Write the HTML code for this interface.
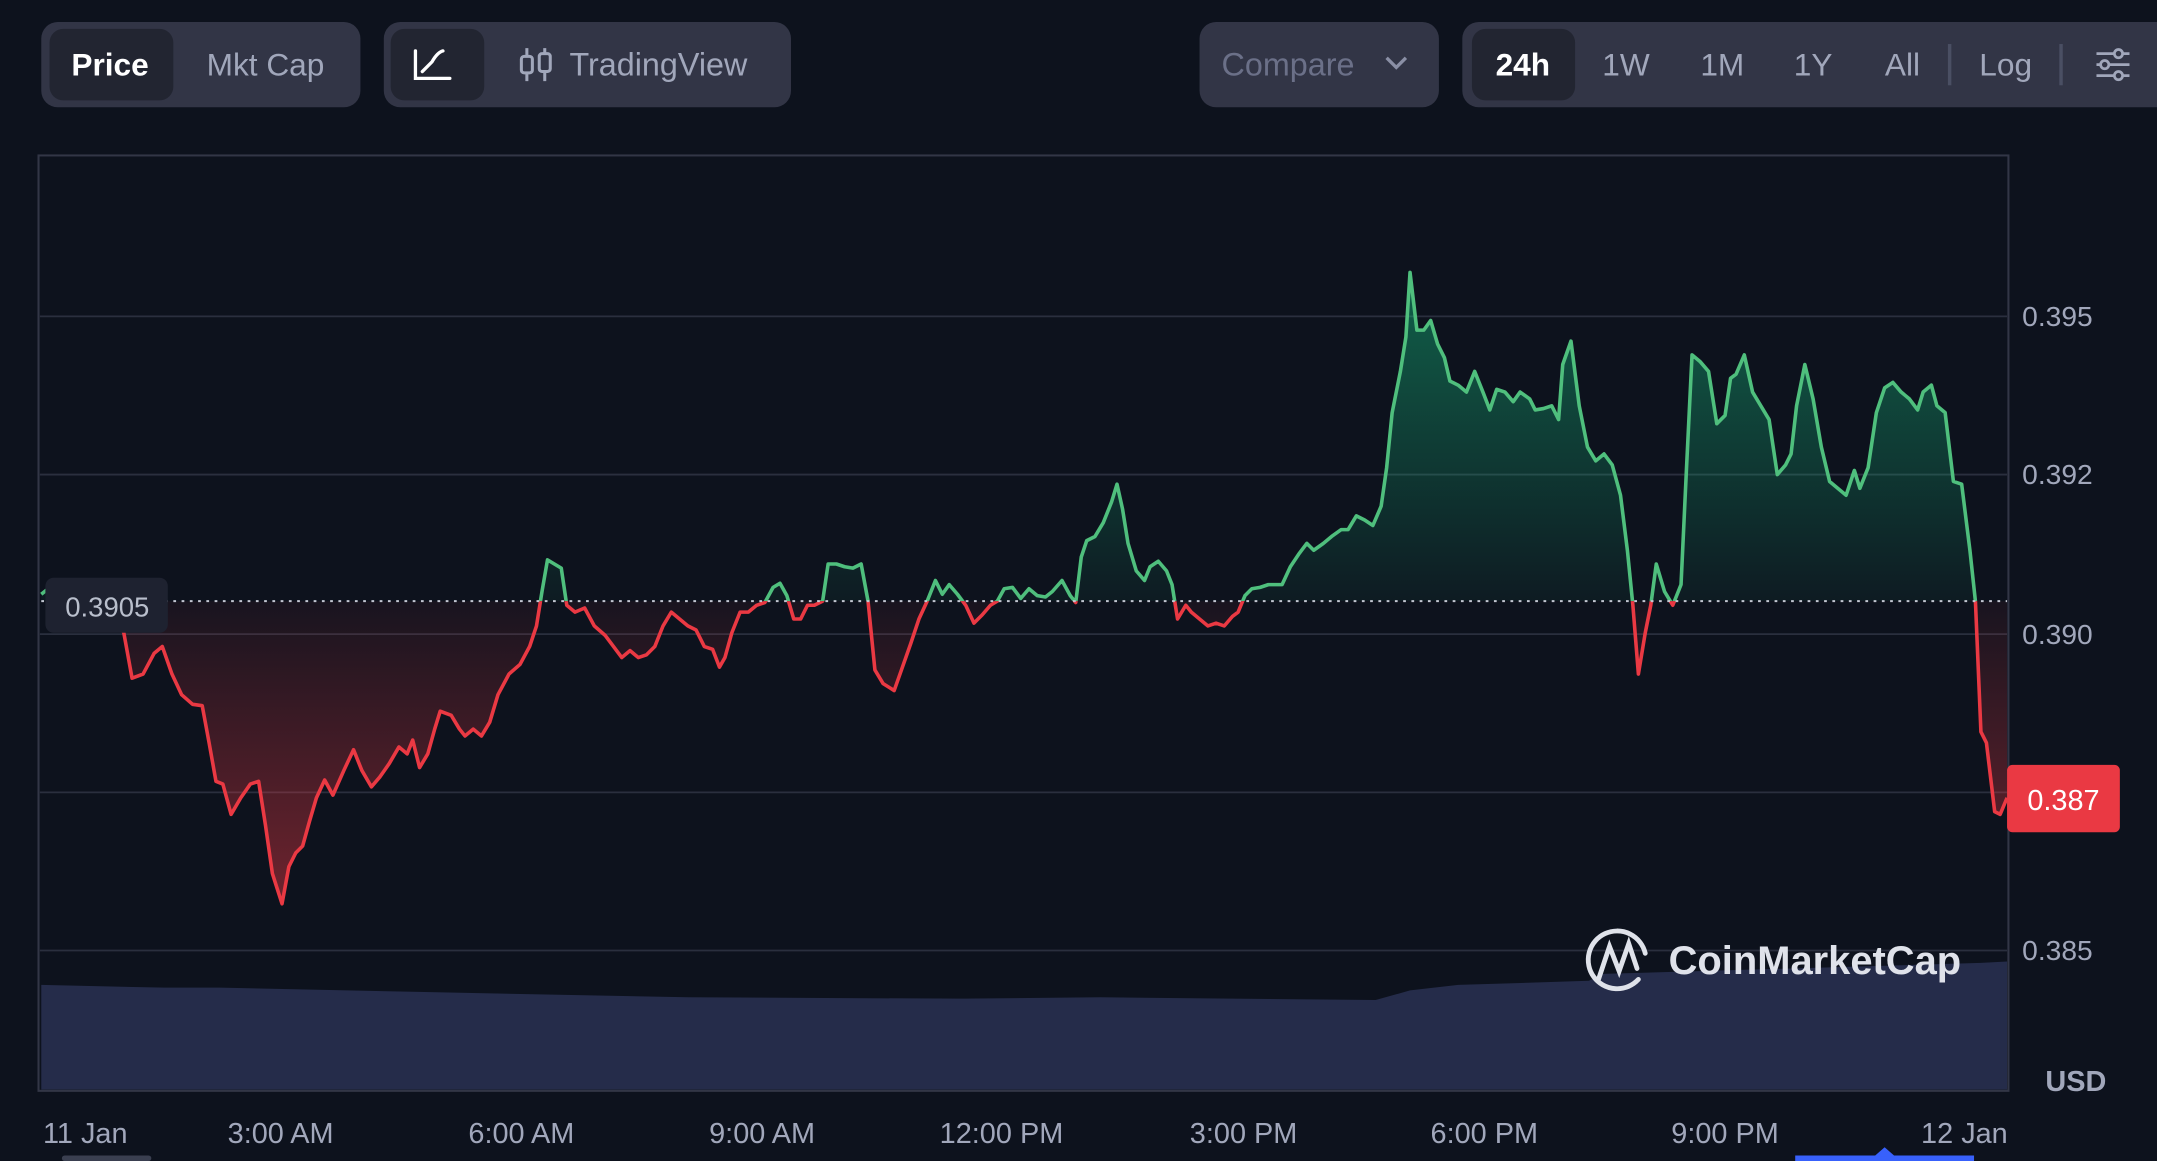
<!DOCTYPE html>
<html><head><meta charset="utf-8"><style>
html,body{margin:0;padding:0;background:#0d121d;overflow:hidden}
svg{display:block}
text{font-family:"Liberation Sans",sans-serif}
</style></head><body>
<svg width="2157" height="1161" viewBox="0 0 1568 844" preserveAspectRatio="none" xmlns="http://www.w3.org/2000/svg">
<defs>
<linearGradient id="gg" x1="0" y1="190" x2="0" y2="437" gradientUnits="userSpaceOnUse"><stop offset="0" stop-color="#16c784" stop-opacity="0.45"/><stop offset="1" stop-color="#16c784" stop-opacity="0.05"/></linearGradient>
<linearGradient id="rg" x1="0" y1="437" x2="0" y2="660" gradientUnits="userSpaceOnUse"><stop offset="0" stop-color="#ea3943" stop-opacity="0.05"/><stop offset="1" stop-color="#ea3943" stop-opacity="0.45"/></linearGradient>
<clipPath id="up"><rect x="0" y="0" width="1568" height="437"/></clipPath>
<clipPath id="dn"><rect x="0" y="437" width="1568" height="400"/></clipPath>
<path id="ln" d="M30,432 L35,428 L40,432 L60,436 L80,440 L90,460 L96,493 L104,490 L112,475 L118,470 L125,490 L132,505 L140,512 L147,513 L152,540 L157,568 L162,570 L168,592 L175,580 L182,570 L188,568 L193,600 L198,635 L205,657 L210,630 L215,620 L220,615 L225,597 L230,580 L236,567 L242,578 L250,560 L257,545 L263,560 L270,572 L276,565 L283,555 L290,543 L296,548 L300,538 L305,558 L311,548 L316,530 L320,517 L328,520 L334,530 L338,535 L344,530 L350,535 L356,525 L362,505 L370,490 L378,483 L385,470 L390,455 L394,430 L398,407 L403,410 L408,413 L412,440 L418,445 L425,442 L432,455 L440,462 L446,470 L452,478 L458,473 L464,478 L470,476 L476,470 L482,455 L488,445 L494,450 L500,455 L506,458 L512,470 L518,472 L523,485 L527,478 L532,460 L538,445 L544,445 L550,440 L556,438 L562,427 L567,424 L572,433 L577,450 L582,450 L587,440 L592,440 L598,437 L602,410 L608,410 L614,412 L620,413 L626,410 L631,437 L636,487 L642,497 L650,502 L656,485 L662,468 L668,450 L674,437 L680,422 L685,432 L690,425 L696,432 L702,440 L708,453 L714,447 L720,440 L725,437 L730,428 L736,427 L742,435 L748,428 L754,433 L760,434 L765,430 L772,422 L778,433 L782,438 L786,405 L790,393 L796,390 L802,380 L808,365 L812,352 L816,370 L820,395 L826,415 L832,422 L836,412 L842,408 L848,415 L852,425 L856,450 L862,440 L866,445 L872,450 L878,455 L884,453 L890,455 L896,448 L900,445 L905,433 L910,428 L916,427 L922,425 L932,425 L938,412 L944,403 L950,395 L955,400 L962,395 L968,390 L975,385 L980,385 L986,375 L992,378 L998,382 L1004,368 L1008,340 L1012,300 L1018,270 L1022,245 L1025,198 L1030,240 L1035,240 L1040,233 L1045,250 L1050,260 L1054,277 L1060,280 L1066,285 L1072,270 L1078,285 L1083,298 L1088,283 L1094,285 L1100,292 L1105,285 L1112,290 L1116,298 L1122,297 L1128,295 L1133,305 L1136,265 L1142,248 L1148,295 L1154,325 L1160,335 L1166,330 L1172,338 L1178,360 L1183,400 L1187,440 L1191,490 L1196,460 L1200,440 L1204,410 L1210,430 L1216,440 L1222,425 L1226,340 L1230,258 L1236,263 L1242,270 L1248,308 L1254,302 L1258,275 L1262,272 L1268,258 L1274,285 L1280,295 L1286,305 L1292,345 L1298,338 L1302,330 L1306,295 L1312,265 L1318,290 L1324,325 L1330,350 L1336,355 L1342,360 L1348,342 L1352,355 L1358,340 L1364,300 L1370,282 L1376,278 L1382,285 L1388,290 L1394,298 L1398,285 L1404,280 L1408,295 L1414,300 L1420,350 L1426,352 L1432,400 L1436,437 L1440,532 L1444,540 L1450,590 L1454,592 L1459,580"/>
<path id="fl" d="M30,432 L35,428 L40,432 L60,436 L80,440 L90,460 L96,493 L104,490 L112,475 L118,470 L125,490 L132,505 L140,512 L147,513 L152,540 L157,568 L162,570 L168,592 L175,580 L182,570 L188,568 L193,600 L198,635 L205,657 L210,630 L215,620 L220,615 L225,597 L230,580 L236,567 L242,578 L250,560 L257,545 L263,560 L270,572 L276,565 L283,555 L290,543 L296,548 L300,538 L305,558 L311,548 L316,530 L320,517 L328,520 L334,530 L338,535 L344,530 L350,535 L356,525 L362,505 L370,490 L378,483 L385,470 L390,455 L394,430 L398,407 L403,410 L408,413 L412,440 L418,445 L425,442 L432,455 L440,462 L446,470 L452,478 L458,473 L464,478 L470,476 L476,470 L482,455 L488,445 L494,450 L500,455 L506,458 L512,470 L518,472 L523,485 L527,478 L532,460 L538,445 L544,445 L550,440 L556,438 L562,427 L567,424 L572,433 L577,450 L582,450 L587,440 L592,440 L598,437 L602,410 L608,410 L614,412 L620,413 L626,410 L631,437 L636,487 L642,497 L650,502 L656,485 L662,468 L668,450 L674,437 L680,422 L685,432 L690,425 L696,432 L702,440 L708,453 L714,447 L720,440 L725,437 L730,428 L736,427 L742,435 L748,428 L754,433 L760,434 L765,430 L772,422 L778,433 L782,438 L786,405 L790,393 L796,390 L802,380 L808,365 L812,352 L816,370 L820,395 L826,415 L832,422 L836,412 L842,408 L848,415 L852,425 L856,450 L862,440 L866,445 L872,450 L878,455 L884,453 L890,455 L896,448 L900,445 L905,433 L910,428 L916,427 L922,425 L932,425 L938,412 L944,403 L950,395 L955,400 L962,395 L968,390 L975,385 L980,385 L986,375 L992,378 L998,382 L1004,368 L1008,340 L1012,300 L1018,270 L1022,245 L1025,198 L1030,240 L1035,240 L1040,233 L1045,250 L1050,260 L1054,277 L1060,280 L1066,285 L1072,270 L1078,285 L1083,298 L1088,283 L1094,285 L1100,292 L1105,285 L1112,290 L1116,298 L1122,297 L1128,295 L1133,305 L1136,265 L1142,248 L1148,295 L1154,325 L1160,335 L1166,330 L1172,338 L1178,360 L1183,400 L1187,440 L1191,490 L1196,460 L1200,440 L1204,410 L1210,430 L1216,440 L1222,425 L1226,340 L1230,258 L1236,263 L1242,270 L1248,308 L1254,302 L1258,275 L1262,272 L1268,258 L1274,285 L1280,295 L1286,305 L1292,345 L1298,338 L1302,330 L1306,295 L1312,265 L1318,290 L1324,325 L1330,350 L1336,355 L1342,360 L1348,342 L1352,355 L1358,340 L1364,300 L1370,282 L1376,278 L1382,285 L1388,290 L1394,298 L1398,285 L1404,280 L1408,295 L1414,300 L1420,350 L1426,352 L1432,400 L1436,437 L1440,532 L1444,540 L1450,590 L1454,592 L1459,580 L1459,437 L30,437 Z"/>
</defs>
<rect width="1568" height="844" fill="#0d121d"/>

<rect x="30" y="16" width="232" height="62" rx="12" fill="#323546"/>
<rect x="36" y="21" width="90" height="52" rx="10" fill="#222531"/>
<text x="80" y="55" font-size="23" font-weight="bold" fill="#fff" text-anchor="middle">Price</text>
<text x="193" y="55" font-size="23" fill="#a1a7bb" text-anchor="middle">Mkt Cap</text>

<rect x="279" y="16" width="296" height="62" rx="12" fill="#323546"/>
<rect x="284" y="21" width="68" height="52" rx="10" fill="#222531"/>
<path d="M302,37 L302,57 L327,57 M307,52 L314,45 Q318,38 322,37" stroke="#fff" stroke-width="2.4" fill="none" stroke-linecap="round"/>
<g stroke="#a1a7bb" stroke-width="2.2" fill="none">
<path d="M383,35 V59 M396,35 V59"/><rect x="379" y="41" width="8" height="12" rx="2" fill="#323546"/><rect x="392" y="39" width="8" height="13" rx="2" fill="#323546"/></g>
<text x="414" y="55" font-size="23.5" fill="#a1a7bb">TradingView</text>

<rect x="872" y="16" width="174" height="62" rx="12" fill="#323546"/>
<text x="888" y="55" font-size="23.5" fill="#6b7088">Compare</text>
<path d="M1008,42 L1015,49 L1022,42" stroke="#8a8fa5" stroke-width="2.4" fill="none"/>

<rect x="1063" y="16" width="520" height="62" rx="12" fill="#323546"/>
<rect x="1070" y="21" width="75" height="52" rx="10" fill="#222531"/>
<text x="1107" y="55" font-size="23" font-weight="bold" fill="#fff" text-anchor="middle">24h</text>
<g font-size="23" fill="#a1a7bb" text-anchor="middle">
<text x="1182" y="55">1W</text><text x="1252" y="55">1M</text><text x="1318" y="55">1Y</text><text x="1383" y="55">All</text><text x="1458" y="55">Log</text></g>
<rect x="1416" y="32" width="2.5" height="30" fill="#4a4f63"/>
<rect x="1497" y="32" width="2.5" height="30" fill="#4a4f63"/>
<g stroke="#a1a7bb" stroke-width="2" fill="#323546"><path d="M1524,39 H1548 M1524,47 H1548 M1524,55 H1548"/><circle cx="1540" cy="39" r="3"/><circle cx="1530" cy="47" r="3"/><circle cx="1540" cy="55" r="3"/></g>

<g stroke="#2a2f3e" stroke-width="1.3">
<line x1="29" y1="230" x2="1459" y2="230"/><line x1="29" y1="345" x2="1459" y2="345"/><line x1="29" y1="461" x2="1459" y2="461"/><line x1="29" y1="576" x2="1459" y2="576"/><line x1="29" y1="691" x2="1459" y2="691"/>
</g>
<rect x="28" y="113" width="1432" height="680" fill="none" stroke="#323646" stroke-width="1.5"/>

<polygon points="30,716 120,718 160,718 300,721 500,725 700,726 800,725 1000,727 1025,720 1060,716 1155,713 1165,708 1440,700 1459,699 1459,792 30,792" fill="#252c4a"/>

<g clip-path="url(#up)"><use href="#fl" fill="url(#gg)"/></g>
<g clip-path="url(#dn)"><use href="#fl" fill="url(#rg)"/></g>
<g clip-path="url(#up)"><use href="#ln" fill="none" stroke="#4fbf7d" stroke-width="2.6" stroke-linejoin="round"/></g>
<g clip-path="url(#dn)"><use href="#ln" fill="none" stroke="#ea3943" stroke-width="2.6" stroke-linejoin="round"/></g>

<line x1="30" y1="437" x2="1459" y2="437" stroke="#c3c7d2" stroke-width="1.5" stroke-dasharray="2,4"/>
<rect x="33" y="420" width="89" height="40" rx="6" fill="#1e2230"/>
<text x="78" y="448" font-size="20" fill="#b9bfcc" text-anchor="middle">0.3905</text>

<g font-size="20.5" fill="#a1a7bb">
<text x="1470" y="237">0.395</text><text x="1470" y="352">0.392</text><text x="1470" y="468">0.390</text><text x="1470" y="698">0.385</text>
</g>
<rect x="1459" y="556" width="82" height="49" rx="4" fill="#ea3943"/>
<text x="1500" y="589" font-size="21" fill="#fff" text-anchor="middle">0.387</text>
<text x="1509" y="793" font-size="21" font-weight="bold" fill="#a1a7bb" text-anchor="middle">USD</text>

<g font-size="21" fill="#a1a7bb" text-anchor="middle">
<text x="62" y="831">11 Jan</text><text x="204" y="831">3:00 AM</text><text x="379" y="831">6:00 AM</text><text x="554" y="831">9:00 AM</text><text x="728" y="831">12:00 PM</text><text x="904" y="831">3:00 PM</text><text x="1079" y="831">6:00 PM</text><text x="1254" y="831">9:00 PM</text><text x="1428" y="831">12 Jan</text>
</g>

<g stroke="#dfe2ea" stroke-width="3.5" fill="none" stroke-linecap="round">
<path d="M1191,712 A21,21 0 1 1 1196,693"/>
<path d="M1162,712 L1170,688 L1177,706 L1184,686 L1190,704"/>
</g>
<text x="1213" y="708" font-size="29" font-weight="bold" fill="#dfe2ea">CoinMarketCap</text>

<rect x="1305" y="840" width="130" height="4" fill="#3861fb"/>
<path d="M1362,841 L1370,834 L1378,841 Z" fill="#3861fb"/>
<rect x="45" y="840" width="65" height="4" rx="2" fill="#3a3f50"/>
</svg>
</body></html>
